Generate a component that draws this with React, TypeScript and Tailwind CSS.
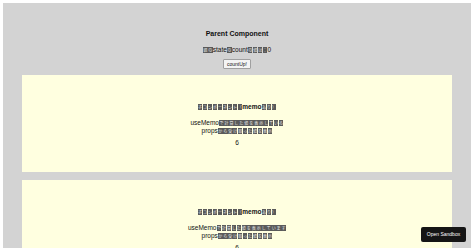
import React from "react";

function J({ t }: { t: string }) {
  return (
    <>
      {Array.from(t).map((c, i) => (
        <span
          key={i}
          className="inline-block w-[4.6px] h-[6px] mx-[0.2px] bg-[#5a5a5a] text-[#e8e8e8] text-[4px] leading-[6px] text-center align-[-1px] overflow-hidden font-normal"
          style={{ fontFamily: '"Noto Sans CJK JP", sans-serif' }}
        >
          {c}
        </span>
      ))}
    </>
  );
}

function Card({ top, line1 }: { top: string; line1: string }) {
  return (
    <div className="w-[430px] bg-[#ffffe0] flex flex-col items-center pt-[28px] pb-[26px] text-[#111]">
      <div className="text-[6.5px] font-bold leading-[7px]">
        <J t="子コンポーネント（" />
        memo
        <J t={top} />
      </div>
      <div className="mt-[9px] text-[6.5px] leading-[7.5px] flex flex-col items-center text-[#111]">
        <div>
          useMemo
          <J t={line1} />
        </div>
        <div>
          props
          <J t="から受け取った値を表示" />
        </div>
      </div>
      <div className="mt-[5px] text-[6.5px] leading-[7px]">6</div>
    </div>
  );
}

export default function App() {
  return (
    <div
      className="min-h-screen bg-white pt-[3px] pl-[3px]"
      style={{ fontFamily: '"Liberation Sans", Arial, sans-serif' }}
    >
      <div className="w-[468px] bg-[#d3d3d3] flex flex-col items-center pt-[27px] pb-[10px]">
        <div className="flex flex-col items-center">
          <h2 className="text-[7px] font-bold leading-[8px] text-[#111]">Parent Component</h2>
          <p className="mt-[8px] text-[6.5px] leading-[7px] text-[#111]">
            <J t="親の" />
            state
            <J t="の" />
            count
            <J t="の値は：" />0
          </p>
          <button className="mt-[6px] h-[10px] px-[3px] bg-[#f4f4f4] border border-[#a0a0a0] rounded-[1px] text-[5px] leading-[8px] text-[#111]">
            countUp!
          </button>
        </div>
        <div className="mt-[6px] flex flex-col gap-[8px]">
          <Card top="あり）" line1="で計算した値を表示している" />
          <Card top="あり）" line1="で計算した値を表示しています" />
        </div>
      </div>
      <div className="fixed right-[8px] bottom-[6px] w-[45px] h-[15px] bg-[#151515] rounded-[2px] flex items-center justify-center text-white text-[5px]">
        Open Sandbox
      </div>
    </div>
  );
}
